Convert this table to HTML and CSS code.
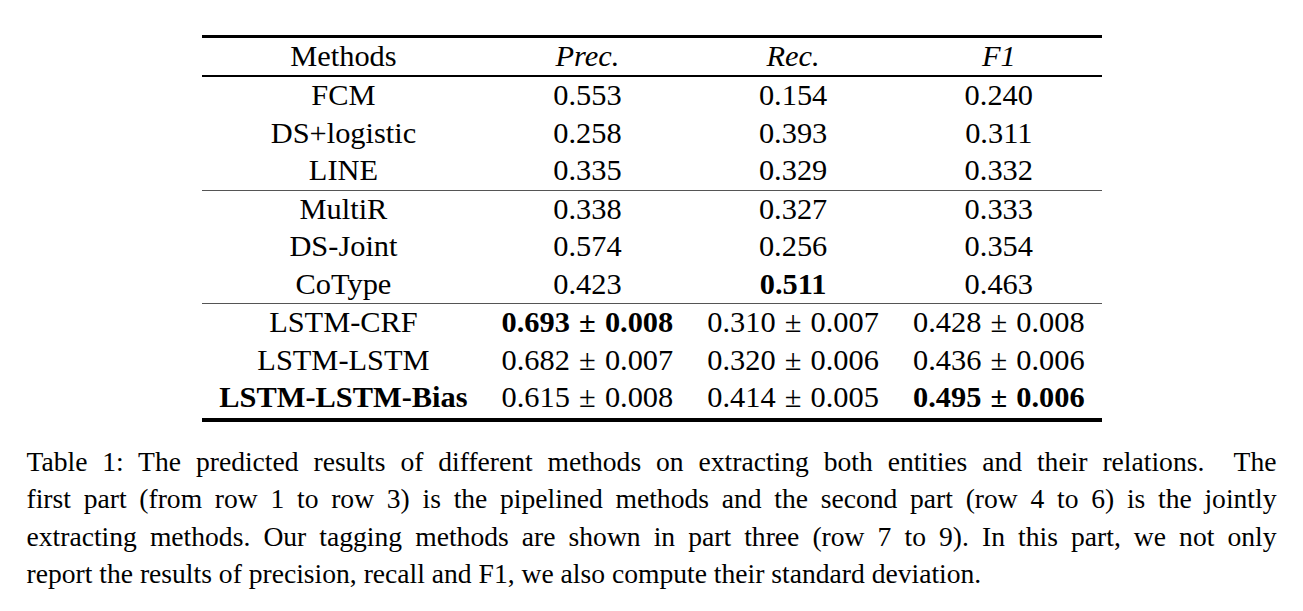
FILE: index.html
```html
<!DOCTYPE html>
<html>
<head>
<meta charset="utf-8">
<link rel="stylesheet" href="styles.css">
</head>
<body>
<div class="page">
  <table class="results">
    <thead>
      <tr>
        <th>Methods</th>
        <th class="it">Prec.</th>
        <th class="it">Rec.</th>
        <th class="it">F1</th>
      </tr>
    </thead>
    <tbody>
      <tr><td>FCM</td><td>0.553</td><td>0.154</td><td>0.240</td></tr>
      <tr><td>DS+logistic</td><td>0.258</td><td>0.393</td><td>0.311</td></tr>
      <tr><td>LINE</td><td>0.335</td><td>0.329</td><td>0.332</td></tr>
    </tbody>
    <tbody>
      <tr><td>MultiR</td><td>0.338</td><td>0.327</td><td>0.333</td></tr>
      <tr><td>DS-Joint</td><td>0.574</td><td>0.256</td><td>0.354</td></tr>
      <tr><td>CoType</td><td>0.423</td><td class="b">0.511</td><td>0.463</td></tr>
    </tbody>
    <tbody class="last">
      <tr><td>LSTM-CRF</td><td class="b">0.693<span class="pm">±</span>0.008</td><td>0.310<span class="pm">±</span>0.007</td><td>0.428<span class="pm">±</span>0.008</td></tr>
      <tr><td>LSTM-LSTM</td><td>0.682<span class="pm">±</span>0.007</td><td>0.320<span class="pm">±</span>0.006</td><td>0.436<span class="pm">±</span>0.006</td></tr>
      <tr><td class="b">LSTM-LSTM-Bias</td><td>0.615<span class="pm">±</span>0.008</td><td>0.414<span class="pm">±</span>0.005</td><td class="b">0.495<span class="pm">±</span>0.006</td></tr>
    </tbody>
  </table>
  <p class="caption">
    <span class="ln">Table 1: The predicted results of different methods on extracting both entities and their relations.&nbsp; The</span>
    <span class="ln">first part (from row 1 to row 3) is the pipelined methods and the second part (row 4 to 6) is the jointly</span>
    <span class="ln">extracting methods. Our tagging methods are shown in part three (row 7 to 9). In this part, we not only</span>
    <span class="ln end">report the results of precision, recall and F1, we also compute their standard deviation.</span>
  </p>
</div>
</body>
</html>
```
FILE: styles.css
```css
html, body {
  margin: 0;
  padding: 0;
  background: #fff;
}
body {
  font-family: "Liberation Serif", "Times New Roman", serif;
  color: #000;
}
.page {
  padding-top: 35px;
  display: flex;
  flex-direction: column;
  align-items: center;
}
.results {
  border-collapse: collapse;
  font-size: 30.4px;
  border-top: 3px solid #000;
  border-bottom: 4px solid #000;
  margin-left: 1px;
}
.results th,
.results td {
  padding: 0 17px;
  text-align: center;
  white-space: nowrap;
  font-weight: normal;
}
.results th {
  line-height: 36px;
  padding-bottom: 1px;
}
.results td {
  line-height: 37.5px;
}
.results tbody.last tr:last-child td {
  padding-bottom: 1px;
}
.results thead tr {
  border-bottom: 2.5px solid #000;
}
.results tbody + tbody tr:first-child {
  border-top: 1px solid #555;
}
.results .it {
  font-style: italic;
}
.results .b {
  font-weight: bold;
}
.pm {
  padding: 0 0.3em;
}
.caption {
  margin: 21px 0 0;
  width: 1250px;
  font-size: 27.6px;
  line-height: 37.5px;
}
.caption .ln {
  display: block;
  white-space: nowrap;
  text-align: justify;
  text-align-last: justify;
}
.caption .ln.end {
  text-align-last: left;
}
```
